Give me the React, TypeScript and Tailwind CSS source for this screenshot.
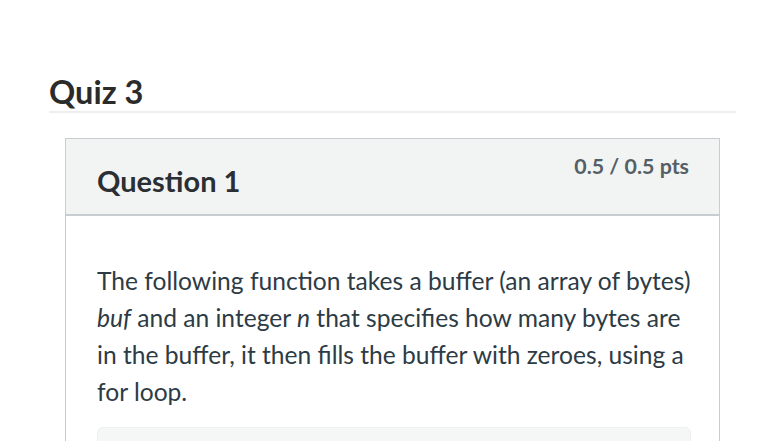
import React from "react";

export default function App() {
  return (
    <div className="w-[784px] h-[441px] overflow-hidden bg-white text-[#2d3b45]" style={{ fontFamily: "Lato, 'Noto Sans', sans-serif" }}>
      <div className="pl-[49px] pr-[48px] pt-[73px]">
        <h1 className="text-[32.5px] font-bold leading-[37px] pb-[1px] border-b-2 border-[#eeeeee] text-[#2b2b2b]">Quiz 3</h1>
        <div className="mx-4 mt-[25px] border border-[#c7cdd1] border-b-0">
          <div className="flex justify-between items-start bg-[#f2f4f4] border-b-2 border-[#c7cdd1] pl-[31px] pr-[30px] h-[77px]">
            <div className="pt-[25px] text-[29px] font-bold leading-[34px] text-[#2b2f33]">Question 1</div>
            <div className="pt-[14px] text-[21.4px] font-bold leading-[26px] text-[#555f66]">0.5 / 0.5 pts</div>
          </div>
          <div className="pl-[31px] pr-[28px] pt-[46px] bg-white">
            <p className="text-[24.6px] leading-[37px] text-[#2d3b45]">
              The following function takes a buffer (an array of bytes) <em>buf</em> and an integer <em>n</em> that specifies how many bytes are in the buffer, it then fills the buffer with zeroes, using a for loop.
            </p>
            <div className="mt-[17px] h-[40px] rounded-[6px] border border-[#eef0f1] bg-[#f5f7f7]"></div>
          </div>
        </div>
      </div>
    </div>
  );
}
